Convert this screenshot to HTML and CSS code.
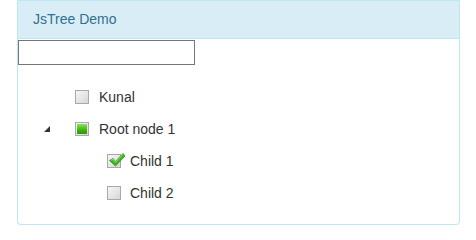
FILE: index.html
```html
<!DOCTYPE html>
<html>
<head>
<meta charset="utf-8">
<link rel="stylesheet" href="styles.css">
</head>
<body>
<div class="page">
  <div class="panel">
    <div class="panel-heading">JsTree Demo</div>
    <div class="panel-body">
      <input class="search" type="text">
      <ul class="tree">
        <li class="node">
          <div class="row"><span class="ocl"></span><span class="chk"></span><span class="label">Kunal</span></div>
        </li>
        <li class="node">
          <div class="row"><span class="ocl"><svg width="6" height="6" viewBox="0 0 6 6"><polygon points="6,0 6,6 0,6" fill="#333"/></svg></span><span class="chk partial"><span class="fill"></span></span><span class="label">Root node 1</span></div>
          <ul class="children">
            <li class="node">
              <div class="row"><span class="ocl"></span><span class="chk checked"><svg class="tick" width="18" height="16" viewBox="0 0 18 16"><path d="M1.5 8.5 L5 6.5 L7.5 9.5 L15 1.5 L17 4 L7.5 14 Z" fill="#3fb51f" stroke="#2b8f12" stroke-width="0.8" stroke-linejoin="round"/><path d="M3 8.3 L5 7.3 L7.5 10.3 L14.8 2.6" fill="none" stroke="#8be26a" stroke-width="1"/></svg></span><span class="label">Child 1</span></div>
            </li>
            <li class="node">
              <div class="row"><span class="ocl"></span><span class="chk"></span><span class="label">Child 2</span></div>
            </li>
          </ul>
        </li>
      </ul>
    </div>
  </div>
</div>
</body>
</html>
```

FILE: styles.css
```css
html, body {
  margin: 0;
  padding: 0;
  background: #fff;
}
.page {
  padding: 0 16px 0 17px;
  font-family: "Liberation Sans", Arial, sans-serif;
  font-size: 14px;
  color: #333;
}
.panel {
  border: 1px solid #bce8f1;
  border-radius: 0 0 4px 4px;
  box-shadow: 0 1px 1px rgba(0,0,0,0.05);
  background: #fff;
}
.panel-heading {
  background: #d9edf7;
  color: #31708f;
  border-bottom: 1px solid #bce8f1;
  padding: 10px 15px;
  font-size: 14px;
  line-height: 17px;
}
.panel-body {
  padding: 0 0 15px 0;
}
.search {
  display: block;
  box-sizing: border-box;
  width: 177px;
  height: 25px;
  margin: 1px 0 0 0;
  border: 1px solid #767676;
  padding: 1px 2px;
  font: inherit;
  outline: none;
}
.tree, .children {
  list-style: none;
  margin: 0;
  padding: 0;
}
.tree {
  margin-top: 16px;
  padding-left: 13px;
}
.children {
  padding-left: 32px;
}
.row {
  display: flex;
  align-items: center;
  height: 32px;
}
.ocl {
  width: 32px;
  height: 32px;
  display: flex;
  align-items: center;
  justify-content: center;
}
.chk {
  position: relative;
  box-sizing: border-box;
  width: 14px;
  height: 14px;
  margin-left: 12px;
  border: 1px solid #a8a8a8;
  background: linear-gradient(135deg, #f6f6f6 0%, #e4e4e4 60%, #d6d6d6 100%);
  display: flex;
  align-items: center;
  justify-content: center;
}
.chk .fill {
  width: 10px;
  height: 10px;
  background: linear-gradient(#8ee05c, #3db411 60%, #2a9a05);
}
.chk .tick {
  position: absolute;
  left: 0px;
  top: -3px;
}
.label {
  margin-left: 10px;
  line-height: 20px;
  color: #333;
}
.children .label {
  margin-left: 9px;
}
```
